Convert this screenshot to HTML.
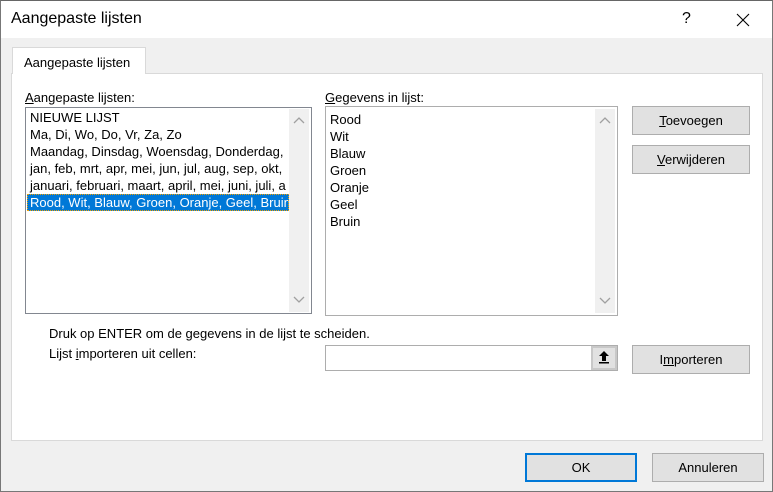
<!DOCTYPE html>
<html><head><style>
*{box-sizing:border-box;margin:0;padding:0}
body{width:773px;height:492px;position:relative;background:#f0f0f0;font-family:"Liberation Sans",sans-serif;font-size:13px;color:#000;overflow:hidden}
.a{position:absolute;white-space:nowrap}
.btn{position:absolute;background:#e1e1e1;border:1px solid #adadad;text-align:center;line-height:27px;font-size:13px}
u{text-decoration:underline}
.sb{position:absolute;background:#f0f0f0}
</style></head><body>
<div class="a" style="left:0;top:0;width:773px;height:492px;border:1px solid #777;border-top-color:#666"></div>
<div class="a" style="left:1px;top:1px;width:771px;height:37px;background:#fff"></div>
<div class="a" style="left:11px;top:10px;font-size:16px">Aangepaste lijsten</div>
<div class="a" style="left:682px;top:10px;font-size:16px">?</div>
<svg class="a" style="left:736px;top:13px" width="14" height="14"><path d="M1 1L13 13M13 1L1 13" stroke="#000" stroke-width="1.1"/></svg>
<div class="a" style="left:11px;top:73px;width:752px;height:368px;background:#fff;border:1px solid #d9d9d9"></div>
<div class="a" style="left:12px;top:47px;width:134px;height:27px;background:#fff;border:1px solid #d9d9d9;border-bottom:none"></div>
<div class="a" style="left:24px;top:55px">Aangepaste lijsten</div>
<div class="a" style="left:25px;top:90px"><u>A</u>angepaste lijsten:</div>
<div class="a" style="left:25px;top:107px;width:287px;height:207px;border:1px solid #828790;background:#fff;overflow:hidden">
<div class="sb" style="left:263px;top:1px;width:20px;height:203px"></div>
<svg class="a" style="left:267px;top:8px" width="12" height="8"><path d="M1 7L6 2L11 7" stroke="#a0a0a0" fill="none" stroke-width="1.3"/></svg>
<svg class="a" style="left:267px;top:188px" width="12" height="8"><path d="M1 1L6 6L11 1" stroke="#a0a0a0" fill="none" stroke-width="1.3"/></svg>
<div style="position:absolute;left:1px;top:1px;width:262px;line-height:17px;overflow:hidden">
<div style="padding-left:3px">NIEUWE LIJST</div>
<div style="padding-left:3px">Ma, Di, Wo, Do, Vr, Za, Zo</div>
<div style="padding-left:3px">Maandag, Dinsdag, Woensdag, Donderdag,</div>
<div style="padding-left:3px">jan, feb, mrt, apr, mei, jun, jul, aug, sep, okt,</div>
<div style="padding-left:3px">januari, februari, maart, april, mei, juni, juli, a</div>
<div style="padding-left:3px;background:#0078d7;color:#fff;outline:1px dotted #f0a000;outline-offset:-1px">Rood, Wit, Blauw, Groen, Oranje, Geel, Bruin</div>
</div></div>
<div class="a" style="left:325px;top:90px"><u>G</u>egevens in lijst:</div>
<div class="a" style="left:325px;top:106px;width:293px;height:210px;border:1px solid #adadad;background:#fff">
<div class="sb" style="left:269px;top:2px;width:20px;height:204px"></div>
<svg class="a" style="left:273px;top:9px" width="12" height="8"><path d="M1 7L6 2L11 7" stroke="#a0a0a0" fill="none" stroke-width="1.3"/></svg>
<svg class="a" style="left:273px;top:190px" width="12" height="8"><path d="M1 1L6 6L11 1" stroke="#a0a0a0" fill="none" stroke-width="1.3"/></svg>
<div style="position:absolute;left:4px;top:4px;line-height:17px">Rood<br>Wit<br>Blauw<br>Groen<br>Oranje<br>Geel<br>Bruin</div>
</div>
<div class="btn" style="left:632px;top:106px;width:118px;height:29px"><u>T</u>oevoegen</div>
<div class="btn" style="left:632px;top:145px;width:118px;height:29px"><u>V</u>erwijderen</div>
<div class="a" style="left:49px;top:326px">Druk op ENTER om de gegevens in de lijst te scheiden.</div>
<div class="a" style="left:49px;top:346px">Lijst <u>i</u>mporteren uit cellen:</div>
<div class="a" style="left:325px;top:345px;width:293px;height:26px;border:1px solid #adadad;background:#fff"></div>
<div class="a" style="left:591px;top:346px;width:26px;height:24px;background:#e1e1e1;border:2px solid #c8c8c8"></div>
<svg class="a" style="left:598px;top:350px" width="12" height="14"><path d="M6 1L1 6H4V11H8V6H11Z" fill="#000"/><rect x="1" y="12" width="10" height="1.5" fill="#000"/></svg>
<div class="btn" style="left:632px;top:345px;width:118px;height:29px">I<u>m</u>porteren</div>
<div class="btn" style="left:525px;top:453px;width:112px;height:29px;border:2px solid #0078d7;line-height:26px">OK</div>
<div class="btn" style="left:652px;top:453px;width:112px;height:29px">Annuleren</div>
</body></html>
